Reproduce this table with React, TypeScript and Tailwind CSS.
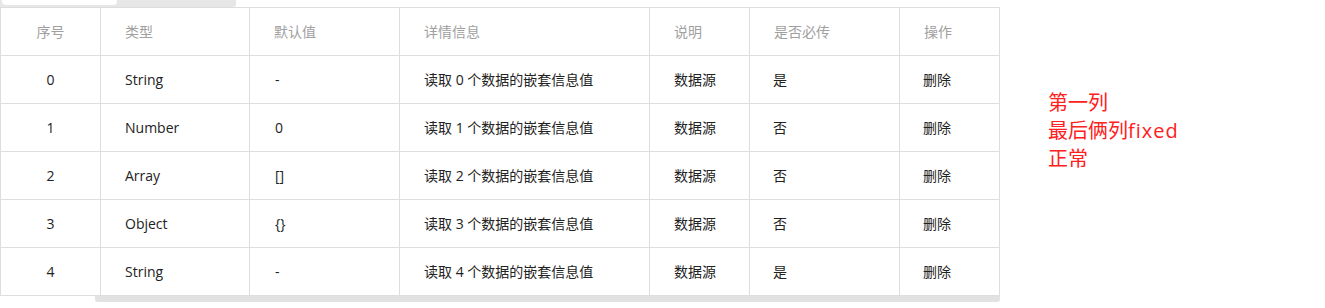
const rows = [
  { type: 'String', def: '-', must: '是' },
  { type: 'Number', def: '0', must: '否' },
  { type: 'Array', def: '[]', must: '否' },
  { type: 'Object', def: '{}', must: '否' },
  { type: 'String', def: '-', must: '是' },
];

const headers = ['序号', '类型', '默认值', '详情信息', '说明', '是否必传', '操作'];

export default function App() {
  return (
    <div
      className="flex items-start bg-white w-[1325px] h-[308px] overflow-hidden text-[14px]"
      style={{ fontFamily: '"Open Sans", "Noto Sans CJK SC", sans-serif' }}
    >
      <div className="flex flex-col w-[1000px]">
        {/* scrolled-off bar above */}
        <div className="w-[236px] h-[7px] bg-[#e6e6e6] rounded-br-[3px]">
          <div className="ml-[2px] w-[115px] h-[5px] bg-white rounded-b-[4px]" />
        </div>

        <div className="grid grid-cols-[100px_149px_150px_250px_100px_150px_100px] border-l border-t border-[#dddddd]">
          {headers.map((h, i) => (
            <div
              key={h}
              className={`h-[48px] flex items-center border-r border-b border-[#dddddd] text-[#a0a0a0] ${i === 0 ? 'justify-center' : 'pl-[24px]'}`}
            >
              {h}
            </div>
          ))}
          {rows.map((r, i) => (
            <div key={i} className="contents text-[#222222]">
              <div className="h-[48px] flex items-center justify-center border-r border-b border-[#dddddd]">{i}</div>
              <div className="h-[48px] flex items-center pl-[24px] border-r border-b border-[#dddddd]">{r.type}</div>
              <div className="h-[48px] flex items-center pl-[25px] border-r border-b border-[#dddddd]">{r.def}</div>
              <div className="h-[48px] flex items-center pl-[24px] border-r border-b border-[#dddddd]">
                读取 {i} 个数据的嵌套信息值
              </div>
              <div className="h-[48px] flex items-center pl-[24px] border-r border-b border-[#dddddd]">数据源</div>
              <div className="h-[48px] flex items-center pl-[23px] border-r border-b border-[#dddddd]">{r.must}</div>
              <div className="h-[48px] flex items-center pl-[23px] border-r border-b border-[#dddddd]">删除</div>
            </div>
          ))}
        </div>

        {/* horizontal scrollbar */}
        <div className="ml-[95px] w-[905px] h-[6px] bg-[#e2e2e2] rounded-b-[3px]" />
      </div>

      <div className="ml-[48px] mt-[89px] text-[20px] leading-[28px] text-[#ff2020]">
        <div>第一列</div>
        <div>
          最后俩列<span className="tracking-[1px]">fixed</span>
        </div>
        <div>正常</div>
      </div>
    </div>
  );
}
